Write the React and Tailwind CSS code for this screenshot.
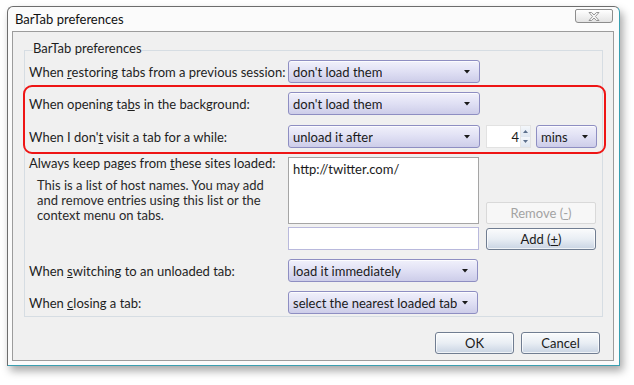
import React from "react";

const font = { fontFamily: "Lato, 'Open Sans', sans-serif" };

function Arrow() {
  return (
    <svg width="6" height="4" viewBox="0 0 6 4" className="shrink-0">
      <path d="M0 0 H6 L3 3.5 Z" fill="#1a1a1a" />
    </svg>
  );
}

function Select({ text, w, arrowMr = "mr-[9px]" }) {
  return (
    <div
      className={`flex items-center h-[23px] ${w} shrink-0 rounded-[3px] border border-[#8e8ec2] bg-gradient-to-b from-[#f1f1fb] via-[#e0e0f4] to-[#cdcde9] pl-[4px] text-[#1a1a1a] shadow-[inset_0_1px_0_rgba(255,255,255,0.8)]`}
    >
      <span className="truncate">{text}</span>
      <span className={`ml-auto ${arrowMr} flex`}>
        <Arrow />
      </span>
    </div>
  );
}

function Label({ children }) {
  return <div className="w-[259px] shrink-0 text-[#1e1e1e]">{children}</div>;
}

function VistaButton({ children, w, h = "h-[22px]" }) {
  return (
    <div
      className={`${w} ${h} flex items-center justify-center rounded-[3px] border border-[#707d91] bg-gradient-to-b from-[#fafbfc] via-[#e9eef4] to-[#c9d4e3] text-[#1a1a1a] shadow-[inset_0_0_0_1px_rgba(255,255,255,0.7)]`}
    >
      {children}
    </div>
  );
}

export default function App() {
  return (
    <div
      className="relative w-[634px] h-[385px] bg-white pl-[7px] pt-[6px] text-[13px] leading-[16px]"
      style={font}
    >
      {/* window */}
      <div className="w-[613px] h-[360px] flex flex-col rounded-t-[6px] border border-[#6d6d6d] border-r-[#3a9fb1] border-b-[#3a9fb1] bg-[#fbfbfb] px-[4px] pb-[4px] pr-[5px] shadow-[3px_5px_9px_rgba(0,0,0,0.35)]">
        {/* title bar */}
        <div className="h-[24px] flex items-start shrink-0">
          <div className="pl-[3px] pt-[4px] text-[13px] text-[#111]">BarTab preferences</div>
          <div className="ml-auto mt-[2px] mr-[1px] w-[38px] h-[14px] flex items-center justify-center rounded-b-[3px] rounded-t-[2px] border border-[#8d8d8d] bg-gradient-to-b from-[#ffffff] to-[#e4e4e4]">
            <svg width="12" height="9" viewBox="0 0 12 9">
              <path
                d="M1 0.5 H3.6 L6 3 L8.4 0.5 H11 L7.4 4.5 L11 8.5 H8.4 L6 6 L3.6 8.5 H1 L4.6 4.5 Z"
                fill="#fafafa"
                stroke="#8a8a8a"
                strokeWidth="0.9"
              />
            </svg>
          </div>
        </div>

        {/* body */}
        <div className="flex-1 flex flex-col border border-[#9c9c9c] bg-[#f0f0f0]">
          <fieldset className="ml-[11px] mt-[8px] w-[579px] border border-[#d6dde3] pl-[4px] pb-[2px]">
            <legend className="ml-[4px] pb-[4px] leading-[16px] text-[#1e1e1e]">BarTab preferences</legend>

            <div className="flex items-center h-[23px]">
              <Label>
                When <u>r</u>estoring tabs from a previous session:
              </Label>
              <Select text="don't load them" w="w-[192px]" />
            </div>

            <div className="flex items-center h-[23px] mt-[9px]">
              <Label>
                When opening ta<u>b</u>s in the background:
              </Label>
              <Select text="don't load them" w="w-[192px]" />
            </div>

            <div className="flex items-center h-[23px] mt-[10px]">
              <Label>
                When I don'<u>t</u> visit a tab for a while:
              </Label>
              <Select text="unload it after" w="w-[192px]" />
              <div className="ml-[6px] flex h-[23px] w-[45px] border border-[#e2e2e2] bg-white">
                <div className="flex-1 flex items-center justify-end pr-[1px] text-[#1a1a1a]">4</div>
                <div className="w-[10px] flex flex-col border-l border-[#e6e6e6]">
                  <div className="flex-1 flex items-center justify-center bg-gradient-to-b from-[#f4f7fb] to-[#dfe7f1]">
                    <svg width="5" height="3" viewBox="0 0 5 3">
                      <path d="M0 3 L2.5 0 L5 3 Z" fill="#5b6f8c" />
                    </svg>
                  </div>
                  <div className="flex-1 flex items-center justify-center bg-gradient-to-b from-[#f4f7fb] to-[#dfe7f1]">
                    <svg width="5" height="3" viewBox="0 0 5 3">
                      <path d="M0 0 L2.5 3 L5 0 Z" fill="#5b6f8c" />
                    </svg>
                  </div>
                </div>
              </div>
              <div className="ml-[5px]">
                <Select text="mins" w="w-[61px]" arrowMr="mr-[8px]" />
              </div>
            </div>

            <div className="flex mt-[9px]">
              <div className="w-[259px] shrink-0 text-[#1e1e1e]">
                <div className="-mt-[2px]">
                  Always keep pages from <u>t</u>hese sites loaded:
                </div>
                <div className="mt-[7px] pl-[8px] leading-[15px] text-[#2a2a2a]">
                  This is a list of host names. You may add
                  <br />
                  and remove entries using this list or the
                  <br />
                  context menu on tabs.
                </div>
              </div>
              <div className="flex flex-col w-[191px] shrink-0">
                <div className="h-[67px] border border-[#a5a5a5] bg-white pl-[4px] pt-[3px] text-[#1a1a1a]">
                  http://twitter.com/
                </div>
                <div className="mt-[3px] h-[23px] border border-[#b9b9dc] bg-white" />
              </div>
              <div className="ml-[7px] flex flex-col justify-end w-[110px]">
                <div className="h-[22px] flex items-center justify-center rounded-[2px] border border-[#d9d9d9] bg-[#f7f7f7] text-[#a3a3a3]">
                  Remove (<u>-</u>)
                </div>
                <div className="mt-[4px]">
                  <VistaButton w="w-[110px]">
                    Add (<u>+</u>)
                  </VistaButton>
                </div>
              </div>
            </div>

            <div className="flex items-center h-[23px] mt-[9px]">
              <Label>
                When <u>s</u>witching to an unloaded tab:
              </Label>
              <Select text="load it immediately" w="w-[190px]" />
            </div>

            <div className="flex items-center h-[23px] mt-[9px]">
              <Label>
                When <u>c</u>losing a tab:
              </Label>
              <Select text="select the nearest loaded tab" w="w-[190px]" />
            </div>
          </fieldset>

          <div className="flex justify-end gap-[7px] mt-[15px] pr-[13px]">
            <VistaButton w="w-[79px]">OK</VistaButton>
            <VistaButton w="w-[79px]">Cancel</VistaButton>
          </div>
        </div>
      </div>

      {/* red annotation */}
      <div className="absolute left-[23px] top-[85px] w-[583px] h-[69px] rounded-[9px] border-2 border-[#ee1515]" />
    </div>
  );
}
